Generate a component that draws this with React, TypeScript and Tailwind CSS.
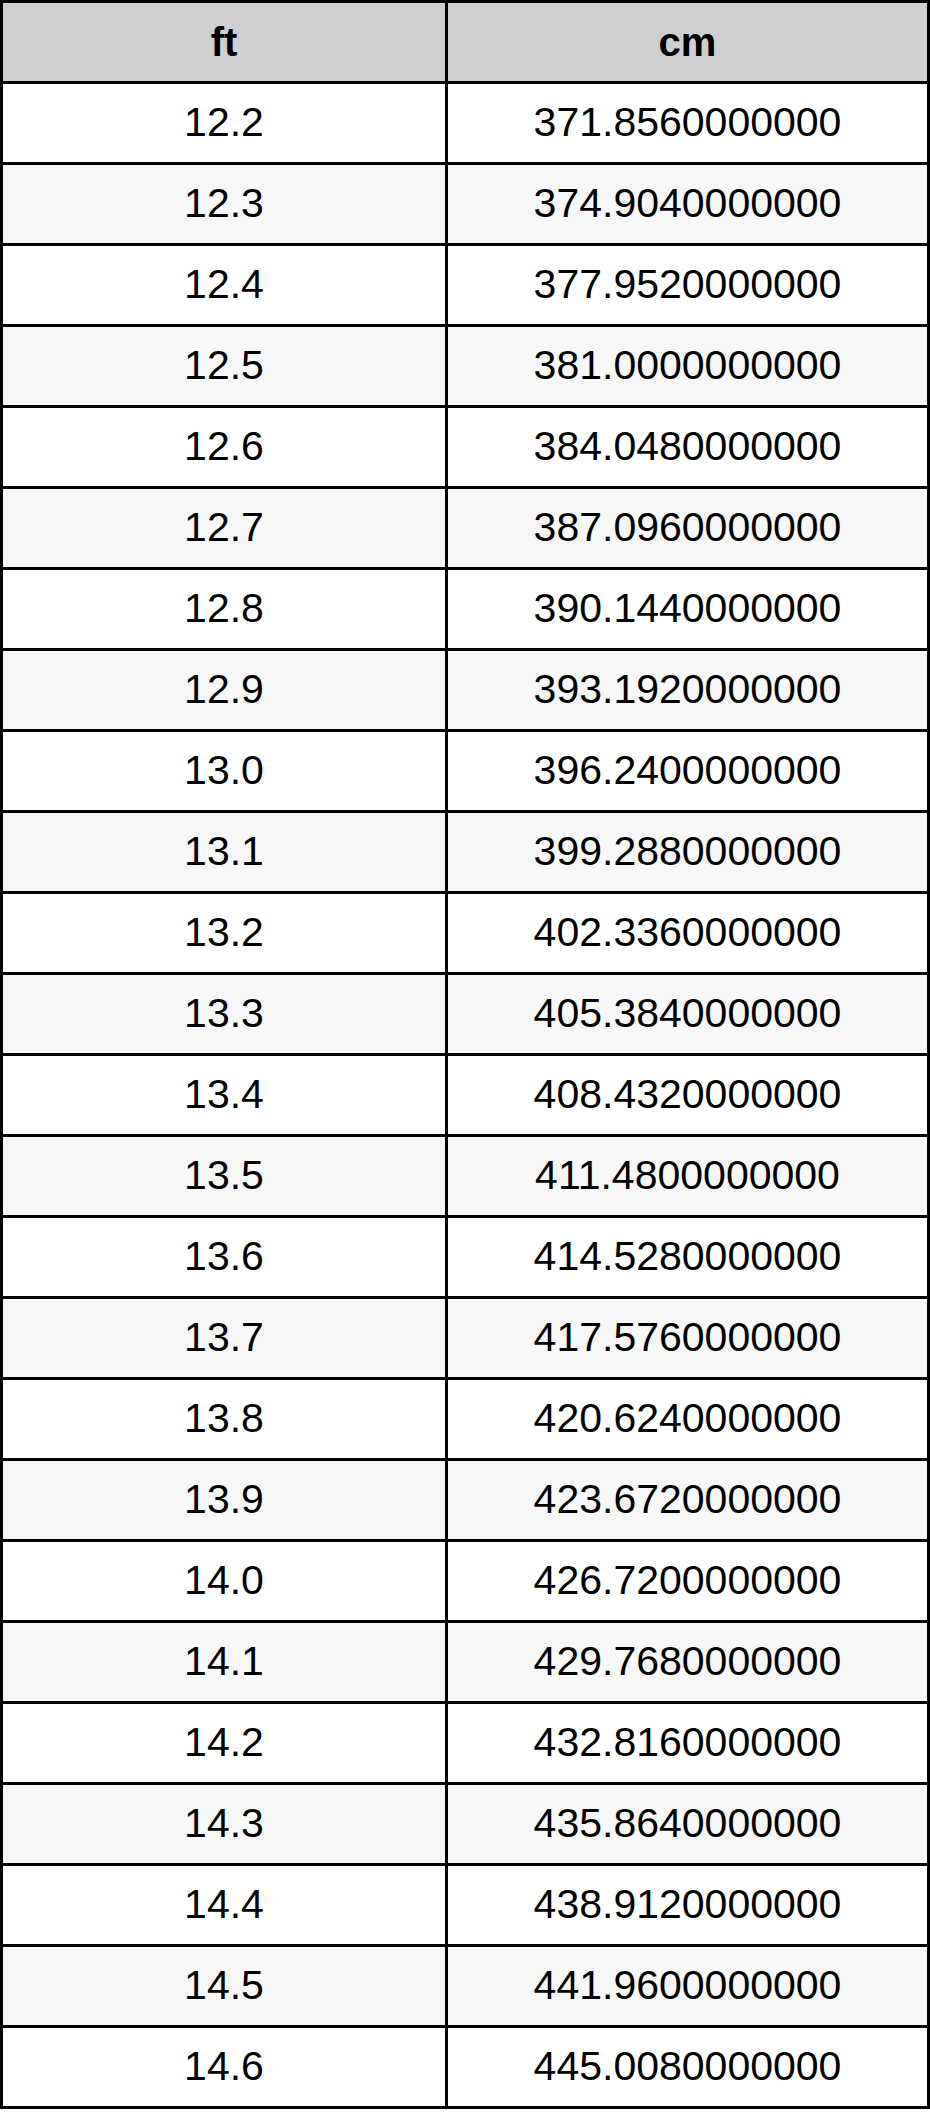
import React from "react";

const rows: [string, string][] = [
  ["12.2", "371.8560000000"],
  ["12.3", "374.9040000000"],
  ["12.4", "377.9520000000"],
  ["12.5", "381.0000000000"],
  ["12.6", "384.0480000000"],
  ["12.7", "387.0960000000"],
  ["12.8", "390.1440000000"],
  ["12.9", "393.1920000000"],
  ["13.0", "396.2400000000"],
  ["13.1", "399.2880000000"],
  ["13.2", "402.3360000000"],
  ["13.3", "405.3840000000"],
  ["13.4", "408.4320000000"],
  ["13.5", "411.4800000000"],
  ["13.6", "414.5280000000"],
  ["13.7", "417.5760000000"],
  ["13.8", "420.6240000000"],
  ["13.9", "423.6720000000"],
  ["14.0", "426.7200000000"],
  ["14.1", "429.7680000000"],
  ["14.2", "432.8160000000"],
  ["14.3", "435.8640000000"],
  ["14.4", "438.9120000000"],
  ["14.5", "441.9600000000"],
  ["14.6", "445.0080000000"],
];

export default function App() {
  return (
    <div className="w-[930px] bg-white font-['Liberation_Sans',Arial,sans-serif] text-black">
      <div className="border-[3px] border-black">
        <div className="flex h-[78px] bg-[#cfcfcf] text-[40px] font-bold">
          <div className="flex w-[445px] items-center justify-center border-r-[3px] border-black">ft</div>
          <div className="flex flex-1 items-center justify-center">cm</div>
        </div>
        {rows.map(([ft, cm], i) => (
          <div
            key={ft}
            className={`flex h-[81px] border-t-[3px] border-black text-[41px] ${i % 2 === 1 ? "bg-[#f7f7f7]" : "bg-white"}`}
          >
            <div className="flex w-[445px] items-center justify-center border-r-[3px] border-black">{ft}</div>
            <div className="flex flex-1 items-center justify-center">{cm}</div>
          </div>
        ))}
      </div>
    </div>
  );
}
